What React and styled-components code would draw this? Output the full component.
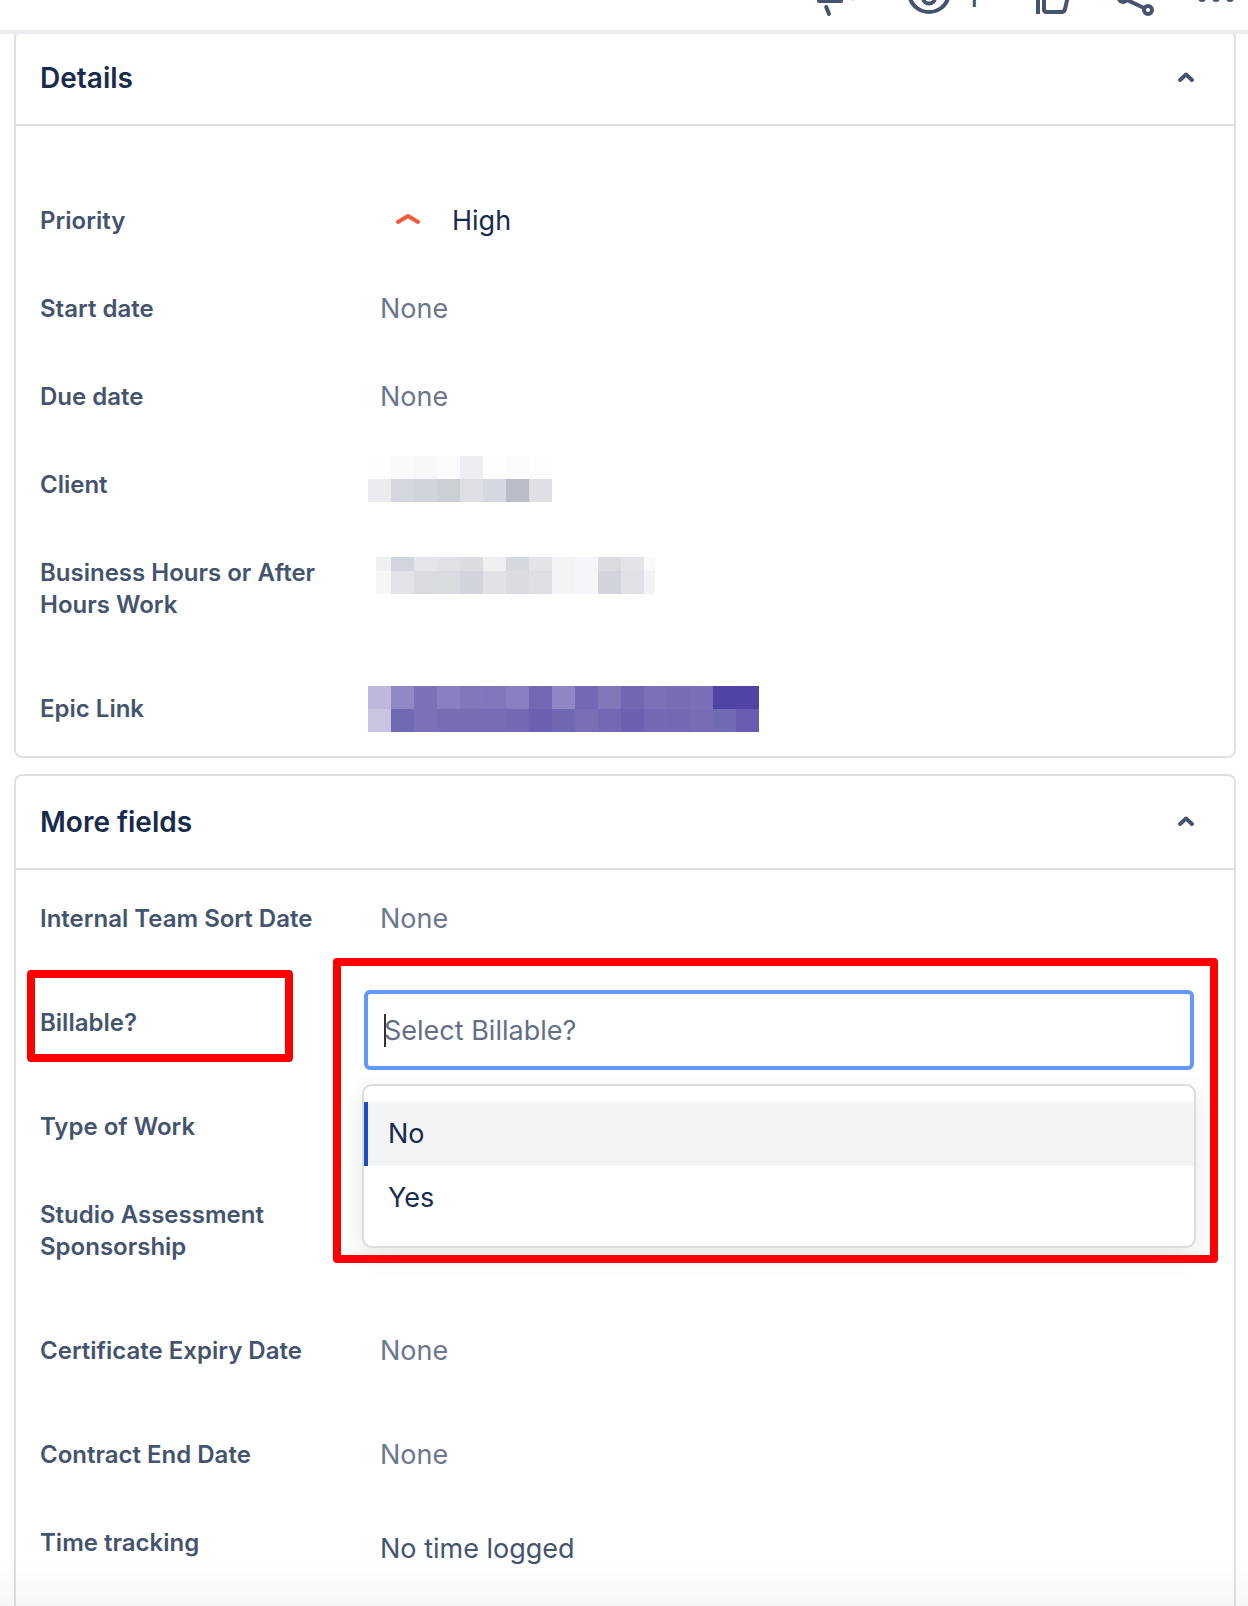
import { useState } from 'react';
import styled, { createGlobalStyle } from 'styled-components';

const CELL = 23;

const clientPixels = {
  x: 4,
  y: 16,
  cols: Array(8).fill(CELL),
  rows: [CELL, CELL],
  colors: [
    ['#fdfdfd', '#f8f9fb', '#f6f7f9', '#fbfbfb', '#edeef3', '#fefefe', '#fafcfb', '#fdfdfd'],
    ['#eaebef', '#d4d7e0', '#d1d4dc', '#cdcfd6', '#dedfe4', '#d4d8e0', '#b9bdc8', '#dedfe3'],
  ],
};

const hoursPixels = {
  x: 12,
  y: 29,
  cols: [15, ...Array(11).fill(CELL), 11],
  rows: [14, CELL],
  colors: [
    ['#eff0f2', '#d2d5de', '#e4e5e9', '#e0e1e5', '#dbdce0', '#eff0f2', '#d6d8e0', '#e3e4e8', '#f2f3f5', '#f5f6f9', '#dbdce1', '#e3e4e8', '#f8faf9'],
    ['#f6f6f6', '#e2e3e7', '#dadbe0', '#d8dbdf', '#d1d4dd', '#e1e2e6', '#dbdce1', '#dedfe4', '#f2f3f5', '#f5f6f9', '#d1d4dc', '#e1e2e7', '#f3f3f5'],
  ],
};

const epicPixels = {
  x: 4,
  y: 22,
  cols: Array(17).fill(CELL),
  rows: [CELL, CELL],
  colors: [
    ['#bfb7dc', '#9189c4', '#7d72ba', '#8a80c1', '#8177bb', '#8176bb', '#887ec0', '#7268b4', '#9086c4', '#7268b5', '#8177bb', '#7367b3', '#7c71b8', '#786eb8', '#7a70b8', '#4f44a3', '#4f44a3'],
    ['#cac4e3', '#7269b4', '#7d71b9', '#776db6', '#776db6', '#776db6', '#7268b4', '#6b60b1', '#7168b4', '#7a6eb6', '#7468b5', '#6c60b0', '#7569b6', '#7468b4', '#786cb6', '#726ab3', '#685db1'],
  ],
};

const Mosaic = ({ label, data }) => {
  const cells = [];
  let y = data.y;
  data.rows.forEach((height, r) => {
    let x = data.x;
    data.cols.forEach((width, c) => {
      cells.push(
        <rect key={`${r}-${c}`} x={x} y={y} width={width} height={height} fill={data.colors[r][c]} />
      );
      x += width;
    });
    y += height;
  });
  return (
    <StyledMosaic role='img' aria-label={label} viewBox='0 0 400 88' shapeRendering='crispEdges'>
      {cells}
    </StyledMosaic>
  );
};

const Toolbar = () => {
  return (
    <StyledToolbar>
      <StyledTool type='button' aria-label='Give feedback'>
        <StyledIcon viewBox='0 0 48 48'>
          <path d='M6 27H28M6 27V15L36 5V22' />
          <path d='M13.2 33L16 40' />
          <path d='M40 14V26' strokeWidth='1' />
        </StyledIcon>
      </StyledTool>
      <StyledTool type='button' aria-label='Watch options' $wide>
        <StyledIcon viewBox='0 0 48 48'>
          <path d='M24 8C14 8 5 18 5 24C7 32 15 38 24 38S41 32 43 24C43 18 34 8 24 8Z' />
          <circle cx='24' cy='23.5' r='6' />
        </StyledIcon>
        <span>1</span>
      </StyledTool>
      <StyledTool type='button' aria-label='Vote options'>
        <StyledIcon viewBox='0 0 48 48'>
          <path d='M10 18V40' strokeLinecap='butt' />
          <path d='M16 20L24 6C28 6 28 10 26 18H36C39 18 40 20 40 22L37 35C36.500 37 35.500 38 33.500 38H18C17 38 16 37 16 36V20Z' />
        </StyledIcon>
      </StyledTool>
      <StyledTool type='button' aria-label='Share'>
        <StyledIcon viewBox='0 0 48 48'>
          <path d='M17 26L34 34M17 22L34 14' />
          <circle cx='13' cy='24' r='4' />
          <circle cx='38' cy='36' r='4' />
          <circle cx='38' cy='12' r='4' />
        </StyledIcon>
      </StyledTool>
      <StyledTool type='button' aria-label='Actions'>
        <StyledIcon viewBox='0 0 48 48' $solid>
          <circle cx='10' cy='24' r='4' />
          <circle cx='24' cy='24' r='4' />
          <circle cx='38' cy='24' r='4' />
        </StyledIcon>
      </StyledTool>
    </StyledToolbar>
  );
};

const Panel = ({ title, last, children }) => {
  const [open, setOpen] = useState(true);
  return (
    <StyledPanel $last={last}>
      <StyledPanelHeader>
        <h2>{title}</h2>
        <StyledToggle
          type='button'
          aria-label={`Toggle ${title}`}
          aria-expanded={open}
          onClick={() => setOpen(!open)}
        >
          <StyledIcon viewBox='0 0 48 48'>
            <path d='M18 26L24 20.500L30 26' />
          </StyledIcon>
        </StyledToggle>
      </StyledPanelHeader>
      {open && children}
    </StyledPanel>
  );
};

const Field = ({ label, roomy, children }) => {
  return (
    <StyledField $roomy={roomy}>
      <StyledName>{label}</StyledName>
      <StyledCell>{children}</StyledCell>
    </StyledField>
  );
};

const BillablePicker = () => {
  const [text, setText] = useState('');
  return (
    <StyledPicker>
      <StyledInput
        id='billable'
        type='text'
        role='combobox'
        aria-expanded='true'
        aria-controls='billable-options'
        placeholder='Select Billable?'
        autoComplete='off'
        value={text}
        onChange={(e) => setText(e.target.value)}
      />
      {text === '' && <StyledCaret />}
      <StyledMenu id='billable-options' role='listbox'>
        <StyledOption role='option' aria-selected='true' $focused>
          No
        </StyledOption>
        <StyledOption role='option' aria-selected='false'>
          Yes
        </StyledOption>
      </StyledMenu>
    </StyledPicker>
  );
};

const App = () => {
  return (
    <StyledPage>
      <GlobalStyle />
      <Toolbar />
      <StyledPanels>
        <Panel title='Details'>
          <StyledDetails>
            <Field label='Priority'>
              <StyledPriority>
                <svg width='56' height='32' viewBox='0 0 56 32' aria-hidden='true'>
                  <path d='M18 17L28 11L38 17' />
                </svg>
                High
              </StyledPriority>
            </Field>
            <Field label='Start date'>
              <StyledValue>None</StyledValue>
            </Field>
            <Field label='Due date'>
              <StyledValue>None</StyledValue>
            </Field>
            <Field label='Client'>
              <Mosaic label='Client hidden' data={clientPixels} />
            </Field>
            <Field label='Business Hours or After Hours Work' roomy>
              <Mosaic label='Work hours hidden' data={hoursPixels} />
            </Field>
            <Field label='Epic Link'>
              <Mosaic label='Epic hidden' data={epicPixels} />
            </Field>
          </StyledDetails>
        </Panel>
        <Panel title='More fields' last>
          <StyledMore>
            <Field label='Internal Team Sort Date' roomy>
              <StyledValue>None</StyledValue>
            </Field>
            <StyledField>
              <StyledName as='label' htmlFor='billable'>
                Billable?
                <StyledNameMark />
              </StyledName>
              <StyledCell>
                <BillablePicker />
                <StyledPickerMark />
              </StyledCell>
            </StyledField>
            <Field label='Type of Work' />
            <Field label='Studio Assessment Sponsorship' roomy />
            <Field label='Certificate Expiry Date' roomy>
              <StyledValue>None</StyledValue>
            </Field>
            <Field label='Contract End Date'>
              <StyledValue>None</StyledValue>
            </Field>
            <Field label='Time tracking'>
              <StyledTracked>No time logged</StyledTracked>
            </Field>
          </StyledMore>
        </Panel>
      </StyledPanels>
      <StyledFade />
    </StyledPage>
  );
};

//styled-components
const GlobalStyle = createGlobalStyle`
  * {
    box-sizing: border-box;
    margin: 0;
    padding: 0;
  }
  body {
    background: #ffffff;
    color: #172b4d;
    font-family: Inter, 'Liberation Sans', sans-serif;
    font-size: 27px;
    line-height: 32px;
  }
  button, input {
    font: inherit;
  }
`;

const StyledPage = styled.div`
  min-height: 100vh;
  display: flex;
  flex-direction: column;
`;

const StyledToolbar = styled.header`
  position: relative;
  z-index: 1;
  height: 30px;
  display: flex;
  align-items: flex-end;
  justify-content: flex-end;
  gap: 18px;
  background: white;
  box-shadow: 0 4px 0 #ebecf0;
`;

const StyledTool = styled.button`
  flex: none;
  height: 64px;
  display: flex;
  align-items: center;
  gap: 14px;
  padding: ${(props) => (props.$wide ? '0 24px 0 18px' : '0 8px')};
  border: none;
  background: none;
  color: #44546f;
  font-weight: 500;
`;

const StyledIcon = styled.svg`
  width: 48px;
  height: 48px;
  fill: ${(props) => (props.$solid ? '#44546f' : 'none')};
  stroke: ${(props) => (props.$solid ? 'none' : '#44546f')};
  stroke-width: 4;
  stroke-linecap: round;
  stroke-linejoin: round;
`;

const StyledPanels = styled.main`
  flex: 1;
  display: flex;
  flex-direction: column;
  gap: 16px;
  padding: 0 12px 0 14px;
`;

const StyledPanel = styled.section`
  flex: ${(props) => (props.$last ? '1' : 'none')};
  border: 2px solid #dfe0e6;
  border-bottom-width: ${(props) => (props.$last ? '0' : '2px')};
  border-radius: ${(props) => (props.$last ? '8px 8px 0 0' : '8px')};
`;

const StyledPanelHeader = styled.div`
  display: flex;
  align-items: center;
  justify-content: space-between;
  height: 94px;
  padding: 0 24px;
  border-bottom: 2px solid #dfe0e6;
  h2 {
    font-size: 28px;
    font-weight: 600;
  }
`;

const StyledToggle = styled.button`
  height: 48px;
  border: none;
  background: none;
`;

const StyledDetails = styled.div`
  padding: 50px 0 4px;
`;

const StyledMore = styled.div`
  padding-top: 4px;
`;

const StyledField = styled.div`
  display: grid;
  grid-template-columns: 324px 1fr;
  padding: 0 40px ${(props) => (props.$roomy ? '16px' : '0')} 24px;
`;

const StyledName = styled.div`
  position: relative;
  padding: 29px 32px 27px 0;
  color: #44546f;
  font-size: 24px;
  font-weight: 600;
`;

const StyledCell = styled.div`
  position: relative;
`;

const StyledValue = styled.p`
  padding: 29px 16px 0;
  color: #6b778c;
`;

const StyledTracked = styled(StyledValue)`
  color: #44546f;
  line-height: 44px;
`;

const StyledPriority = styled.div`
  display: flex;
  gap: 16px;
  padding: 29px 16px 0;
  path {
    fill: none;
    stroke: #f15b3c;
    stroke-width: 4;
    stroke-linecap: round;
    stroke-linejoin: round;
  }
`;

const StyledMosaic = styled.svg`
  display: block;
  width: 400px;
  height: 88px;
`;

const StyledPicker = styled.div`
  position: relative;
  padding: 12px 0;
`;

const StyledInput = styled.input`
  display: block;
  width: 100%;
  height: 80px;
  padding: 0 16px;
  border: 4px solid #6099f8;
  border-radius: 6px;
  outline: none;
  background: white;
  color: #172b4d;
  &::placeholder {
    color: #626f86;
    opacity: 1;
  }
`;

const StyledCaret = styled.span`
  position: absolute;
  top: 36px;
  left: 20px;
  width: 2px;
  height: 33px;
  background: #333333;
`;

const StyledMenu = styled.ul`
  position: absolute;
  z-index: 1;
  top: calc(100% + 2px);
  left: -2px;
  right: -2px;
  padding: 16px 0;
  border: 2px solid #dcdcdd;
  border-radius: 10px;
  background: white;
  box-shadow: 0 8px 24px rgba(0, 0, 0, 0.1);
  list-style: none;
`;

const StyledOption = styled.li`
  padding: 16px 20px;
  border-left: 4px solid ${(props) => (props.$focused ? '#1d4fc4' : 'transparent')};
  background: ${(props) => (props.$focused ? '#f3f4f6' : 'transparent')};
`;

const StyledMark = styled.span`
  position: absolute;
  z-index: 2;
  border: 8px solid #ff0000;
  border-radius: 4px;
  pointer-events: none;
`;

const StyledNameMark = styled(StyledMark)`
  top: -8px;
  left: -13px;
  width: 266px;
  height: 92px;
`;

const StyledPickerMark = styled(StyledMark)`
  top: -20px;
  left: -31px;
  right: -24px;
  height: 305px;
`;

const StyledFade = styled.div`
  position: fixed;
  left: 0;
  right: 0;
  bottom: 0;
  height: 48px;
  background: linear-gradient(transparent, rgba(0, 0, 0, 0.03));
  pointer-events: none;
`;

export default App;
